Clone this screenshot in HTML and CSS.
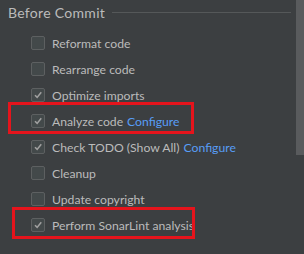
FILE: index.html
```html
<!DOCTYPE html>
<html lang="en">
<head>
<meta charset="UTF-8">
<title>Before Commit</title>
<link rel="stylesheet" href="styles.css">
</head>
<body>

<div class="window">
  <section class="panel">
    <div class="group-title">
      <span>Before Commit</span>
      <div class="rule"></div>
    </div>

    <ul class="options">
      <li class="opt"><span class="box"></span>Reformat code</li>
      <li class="opt"><span class="box"></span>Rearrange code</li>
      <li class="opt"><span class="box on"><svg viewBox="0 0 14 14"><polyline points="3.5,7.2 6,9.8 10.8,3.8"/></svg></span>Optimize imports</li>
      <li class="opt"><span class="box on"><svg viewBox="0 0 14 14"><polyline points="3.5,7.2 6,9.8 10.8,3.8"/></svg></span>Analyze code <a class="link">Configure</a></li>
      <li class="opt"><span class="box on"><svg viewBox="0 0 14 14"><polyline points="3.5,7.2 6,9.8 10.8,3.8"/></svg></span>Check TODO (Show All) <a class="link">Configure</a></li>
      <li class="opt"><span class="box"></span>Cleanup</li>
      <li class="opt"><span class="box"></span>Update copyright</li>
      <li class="opt"><span class="box on"><svg viewBox="0 0 14 14"><polyline points="3.5,7.2 6,9.8 10.8,3.8"/></svg></span>Perform SonarLint analysis</li>
    </ul>

    <!-- red annotation boxes -->
    <div class="mark mark-a"></div>
    <div class="mark mark-b"></div>
  </section>

  <div class="scroll"><div class="thumb"></div></div>
</div>

</body>
</html>
```
FILE: styles.css
```css
html,body{
  margin:0;
  padding:0;
  background:#3c3f41;
  color:#bbbbbb;
  font-family:"Lato","Noto Sans",sans-serif;
  font-size:12px;
  overflow:hidden;
}

.window{
  display:flex;
  height:254px;
}

/* ----------  PANEL  ---------- */
.panel{
  position:relative;
  flex:1;
}

.group-title{
  display:flex;
  align-items:center;
  height:24px;
  padding:0 5px 0 8px;
  font-size:14px;
  letter-spacing:.3px;
}
.group-title .rule{
  flex:1;
  height:1px;
  background:#555859;
  margin-left:7px;
}

.options{
  list-style:none;
  margin:6px 0 0;
  padding:0 0 0 31px;
}
.opt{
  display:flex;
  align-items:center;
  height:26px;
  white-space:nowrap;
  font-size:12.2px;
}

.box{
  box-sizing:border-box;
  width:14px;
  height:14px;
  margin-right:7px;
  border:1px solid #5d6061;
  border-radius:2px;
  background:#43494a;
  flex:none;
}
.box svg{
  display:block;
  width:12px;
  height:12px;
}
.box polyline{
  fill:none;
  stroke:#a0a0a0;
  stroke-width:1.8;
}

.link{
  color:#589df6;
  margin-left:4px;
}

.mark{
  position:absolute;
  box-sizing:border-box;
  border:3px solid #e5141c;
}
.mark-a{left:8px;top:102px;width:186px;height:32px;}
.mark-b{left:12px;top:207px;width:183px;height:32px;}

/* ----------  SCROLLBAR  ---------- */
.scroll{
  width:8px;
  flex:none;
}
.thumb{
  height:155px;
  background:#595b5d;
}
```
